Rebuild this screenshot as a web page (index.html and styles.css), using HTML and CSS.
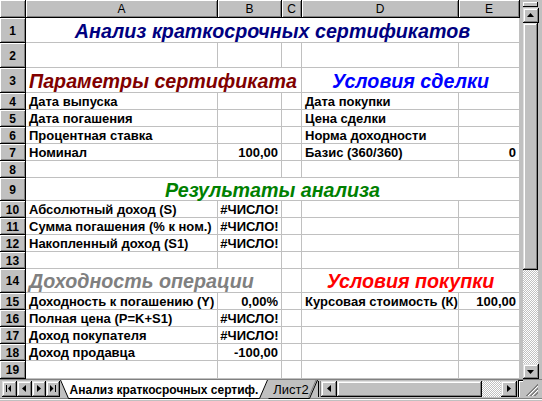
FILE: index.html
```html
<!DOCTYPE html>
<html lang="ru">
<head>
<meta charset="utf-8">
<title>Анализ краткосрочных сертификатов</title>
<link rel="stylesheet" href="styles.css">
</head>
<body>
<div class="window">
  <div class="main">
    <div class="sheet">
      <div class="corner"></div>
      <div class="ch">A</div><div class="ch">B</div><div class="ch">C</div><div class="ch">D</div><div class="ch">E</div>

      <div class="rh">1</div>
      <div class="c t navy m s5">Анализ краткосрочных сертификатов</div>

      <div class="rh">2</div>
      <div class="c"></div><div class="c"></div><div class="c"></div><div class="c"></div><div class="c"></div>

      <div class="rh">3</div>
      <div class="c t maroon s3">Параметры сертификата</div>
      <div class="c t blue m s2">Условия сделки</div>

      <div class="rh">4</div>
      <div class="c">Дата выпуска</div><div class="c"></div><div class="c"></div><div class="c">Дата покупки</div><div class="c"></div>

      <div class="rh">5</div>
      <div class="c">Дата погашения</div><div class="c"></div><div class="c"></div><div class="c">Цена сделки</div><div class="c"></div>

      <div class="rh">6</div>
      <div class="c">Процентная ставка</div><div class="c"></div><div class="c"></div><div class="c">Норма доходности</div><div class="c"></div>

      <div class="rh">7</div>
      <div class="c">Номинал</div><div class="c r">100,00</div><div class="c"></div><div class="c">Базис (360/360)</div><div class="c r">0</div>

      <div class="rh">8</div>
      <div class="c"></div><div class="c"></div><div class="c"></div><div class="c"></div><div class="c"></div>

      <div class="rh">9</div>
      <div class="c t t9 green m s5">Результаты анализа</div>

      <div class="rh">10</div>
      <div class="c">Абсолютный доход (S)</div><div class="c m">#ЧИСЛО!</div><div class="c"></div><div class="c"></div><div class="c"></div>

      <div class="rh">11</div>
      <div class="c">Сумма погашения (% к ном.)</div><div class="c m">#ЧИСЛО!</div><div class="c"></div><div class="c"></div><div class="c"></div>

      <div class="rh">12</div>
      <div class="c">Накопленный доход (S1)</div><div class="c m">#ЧИСЛО!</div><div class="c"></div><div class="c"></div><div class="c"></div>

      <div class="rh">13</div>
      <div class="c"></div><div class="c"></div><div class="c"></div><div class="c"></div><div class="c"></div>

      <div class="rh">14</div>
      <div class="c t grey s2">Доходность операции</div><div class="c"></div>
      <div class="c t red m s2">Условия покупки</div>

      <div class="rh">15</div>
      <div class="c">Доходность к погашению (Y)</div><div class="c r">0,00%</div><div class="c"></div><div class="c">Курсовая стоимость (К)</div><div class="c r">100,00</div>

      <div class="rh">16</div>
      <div class="c">Полная цена (P=K+S1)</div><div class="c m">#ЧИСЛО!</div><div class="c"></div><div class="c"></div><div class="c"></div>

      <div class="rh">17</div>
      <div class="c">Доход покупателя</div><div class="c m">#ЧИСЛО!</div><div class="c"></div><div class="c"></div><div class="c"></div>

      <div class="rh">18</div>
      <div class="c">Доход продавца</div><div class="c r">-100,00</div><div class="c"></div><div class="c"></div><div class="c"></div>

      <div class="rh">19</div>
      <div class="c"></div><div class="c"></div><div class="c"></div><div class="c"></div><div class="c"></div>
    </div>

    <div class="vscroll">
      <div class="vsplit"></div>
      <div class="btn vbtn"><svg width="16" height="15" viewBox="0 0 16 15"><polygon points="7.5,5 11,9 4,9" fill="#000"/></svg></div>
      <div class="vthumb"></div>
      <div class="dither vtrack"></div>
      <div class="btn vbtn"><svg width="16" height="15" viewBox="0 0 16 15"><polygon points="4,6 11,6 7.5,10" fill="#000"/></svg></div>
    </div>
  </div>

  <div class="bottombar">
    <div class="navs">
      <div class="btn nbtn"><svg width="15" height="16" viewBox="0 0 15 16"><rect x="4" y="4" width="1" height="7" fill="#000"/><polygon points="6,7.5 9,4 9,11" fill="#000"/></svg></div>
      <div class="btn nbtn"><svg width="15" height="16" viewBox="0 0 15 16"><polygon points="5,7.5 9,4 9,11" fill="#000"/></svg></div>
      <div class="btn nbtn"><svg width="14" height="16" viewBox="0 0 14 16"><polygon points="5,4 9,7.5 5,11" fill="#000"/></svg></div>
      <div class="btn nbtn"><svg width="14" height="16" viewBox="0 0 14 16"><polygon points="4,4 7.5,7.5 4,11" fill="#000"/><rect x="9" y="4" width="1" height="7" fill="#000"/></svg></div>
    </div>
    <div class="tabs">
      <div class="tab active">
        <svg class="tabshape" width="208" height="19" viewBox="0 0 208 19"><polygon points="0,0 208,0 199.5,18 8.5,18" fill="#fff"/><polyline points="0.5,0 8.5,18.5 199.5,18.5 207.5,0" fill="none" stroke="#000"/></svg>
        <span class="tablabel">Анализ краткосрочных сертиф.</span>
      </div>
      <div class="tab inactive">
        <svg class="tabshape" width="58" height="19" viewBox="0 0 58 19"><polygon points="0,0 58,0 49.5,18 8.5,18" fill="#c0c0c0"/><polyline points="8.5,18.5 49.5,18.5 57.5,0" fill="none" stroke="#000"/><line x1="48.5" y1="17.5" x2="56" y2="0" stroke="#808080"/></svg>
        <span class="tablabel">Лист2</span>
      </div>
    </div>
    <div class="hsplit"></div>
    <div class="hscroll">
      <div class="btn hbtn"><svg width="16" height="16" viewBox="0 0 16 16"><polygon points="6,7.5 10,4 10,11" fill="#000"/></svg></div>
      <div class="hthumb"></div>
      <div class="dither htrack"></div>
      <div class="btn hbtn"><svg width="16" height="16" viewBox="0 0 16 16"><polygon points="6,4 10,7.5 6,11" fill="#000"/></svg></div>
    </div>
    <div class="hbox"></div>
    <div class="grip"><svg width="17" height="16" viewBox="0 0 17 16"><g stroke-width="1"><line x1="16" y1="3" x2="4" y2="15" stroke="#808080"/><line x1="16" y1="4" x2="5" y2="15" stroke="#808080"/><line x1="16" y1="5" x2="6" y2="15" stroke="#fff"/><line x1="16" y1="7" x2="8" y2="15" stroke="#808080"/><line x1="16" y1="8" x2="9" y2="15" stroke="#808080"/><line x1="16" y1="9" x2="10" y2="15" stroke="#fff"/><line x1="16" y1="11" x2="12" y2="15" stroke="#808080"/><line x1="16" y1="12" x2="13" y2="15" stroke="#808080"/></g></svg></div>
  </div>
  <div class="status"></div>
</div>
</body>
</html>
```

FILE: styles.css
```css
* { box-sizing: border-box; }

body {
  margin: 0;
  background: #c0c0c0;
  font-family: "Liberation Sans", Arial, sans-serif;
  color: #000;
}

.window {
  width: 542px;
  height: 401px;
  display: flex;
  flex-direction: column;
  background: #c0c0c0;
  overflow: hidden;
}

.main {
  display: flex;
  height: 379px;
}

.sheet {
  width: 520px;
  display: grid;
  grid-template-columns: 26px 192px 64px 20px 157px 61px;
  grid-template-rows: 18px 25px 25px 25px repeat(5, 17px) 23px repeat(4, 17px) 24px repeat(4, 17px) 18px;
  background: #fff;
}

.corner,
.ch,
.rh {
  background: #c0c0c0;
  border-right: 1px solid #000;
  border-bottom: 1px solid #000;
  box-shadow: inset 1px 1px #fff, inset -1px -1px #808080;
  display: flex;
  align-items: center;
  justify-content: center;
  font-size: 12px;
}

.rh {
  font-weight: bold;
  padding-top: 1px;
}

.c {
  border-right: 1px solid #c0c0c0;
  border-bottom: 1px solid #c0c0c0;
  display: flex;
  align-items: flex-end;
  padding: 0 3px;
  font-size: 13px;
  font-weight: bold;
  line-height: 15px;
  white-space: nowrap;
  overflow: visible;
}

.r { justify-content: flex-end; }
.m { justify-content: center; }

.s2 { grid-column: span 2; }
.s3 { grid-column: span 3; }
.s5 { grid-column: span 5; }

.t {
  font-style: italic;
  font-size: 19.7px;
  line-height: 18px;
  padding-bottom: 2px;
}

.t9 { padding-bottom: 1px; }

.navy { color: #000080; }
.maroon { color: #800000; }
.blue { color: #0000ff; }
.green { color: #008000; }
.grey { color: #808080; }
.red { color: #ff0000; }

.btn {
  background: #c0c0c0;
  box-shadow: inset -1px -1px #000, inset 1px 1px #dfdfdf, inset -2px -2px #808080, inset 2px 2px #fff;
  display: flex;
  align-items: center;
  justify-content: center;
  flex: none;
}

.dither {
  background-image: repeating-conic-gradient(#fff 0% 25%, #c0c0c0 0% 50%);
  background-size: 2px 2px;
}

.vscroll {
  width: 22px;
  display: flex;
  flex-direction: column;
  padding: 2px 4px 0 2px;
  border-left: 1px solid #c0c0c0;
}

.vsplit {
  height: 5px;
  margin-bottom: 1px;
  background: #c0c0c0;
  box-shadow: inset -1px -1px #000, inset 1px 1px #fff;
}

.vbtn {
  width: 16px;
  height: 15px;
}

.vthumb {
  height: 247px;
  background: #c0c0c0;
  box-shadow: inset -1px -1px #000, inset 1px 1px #dfdfdf, inset -2px -2px #808080, inset 2px 2px #fff;
  flex: none;
}

.vtrack { flex: 1; }

.bottombar {
  height: 19px;
  display: flex;
  border-top: 1px solid #808080;
}

.navs {
  display: flex;
  padding: 1px 0 1px 2px;
}

.nbtn:nth-child(1), .nbtn:nth-child(2) { width: 15px; }
.nbtn:nth-child(3), .nbtn:nth-child(4) { width: 14px; }

.tabs {
  display: flex;
  width: 258px;
}

.tab {
  position: relative;
  height: 18px;
  display: flex;
  align-items: center;
  justify-content: center;
  flex: none;
}

.tab.active {
  width: 208px;
  z-index: 2;
}

.tab.inactive {
  width: 58px;
  margin-left: -8px;
  z-index: 1;
}

.tabshape {
  position: absolute;
  left: 0;
  top: 0;
}

.tablabel {
  position: relative;
  z-index: 1;
  padding-top: 1px;
}

.active .tablabel {
  font-size: 12px;
  font-weight: bold;
}

.inactive .tablabel {
  font-size: 13px;
  padding-left: 4px;
}

.hsplit {
  width: 3px;
  margin: 1px 0;
  border-left: 1px solid #000;
  border-right: 1px solid #808080;
}

.hscroll {
  width: 196px;
  display: flex;
  padding: 1px 0;
}

.hbtn {
  width: 16px;
  height: 16px;
}

.hthumb {
  width: 145px;
  height: 16px;
  background: #c0c0c0;
  box-shadow: inset -1px -1px #000, inset 1px 1px #dfdfdf, inset -2px -2px #808080, inset 2px 2px #fff;
  flex: none;
}

.htrack {
  flex: 1;
  height: 16px;
}

.hbox {
  width: 5px;
  margin: 0 0 1px 1px;
  border-left: 1px solid #000;
  border-top: 1px solid #000;
  box-shadow: inset 1px 1px #fff;
}

.grip {
  width: 17px;
  height: 17px;
  margin-left: -1px;
  padding-top: 1px;
}

.status {
  flex: 1;
  border-top: 1px solid #808080;
  box-shadow: inset 0 1px #fff;
}
```
